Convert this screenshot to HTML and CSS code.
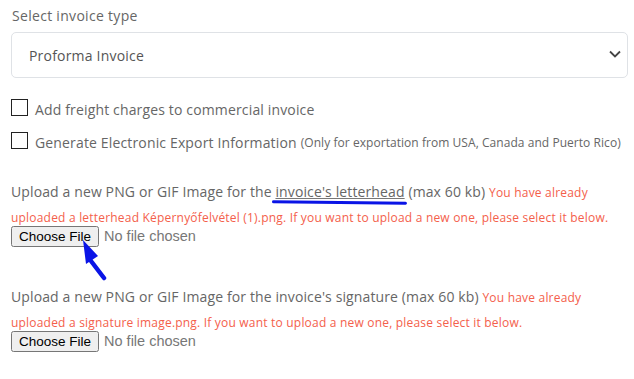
FILE: index.html
```html
<!DOCTYPE html>
<html lang="en">
<head>
    <meta charset="UTF-8">
    <title>Invoice settings</title>
    <link rel="stylesheet" href="styles.css">
</head>
<body>
    <div class="form">
        <label class="field-label" for="invoiceType">Select invoice type</label>
        <div class="select-wrap">
            <select id="invoiceType">
                <option>Proforma Invoice</option>
                <option>Commercial Invoice</option>
            </select>
            <svg class="chevron" width="12" height="8" viewBox="0 0 12 8"><path d="M1 1.5l5 5 5-5" fill="none" stroke="#444" stroke-width="1.8"/></svg>
        </div>

        <label class="check"><span class="box"></span>Add freight charges to commercial invoice</label>
        <label class="check"><span class="box"></span>Generate Electronic Export Information <small>(Only for exportation from USA, Canada and Puerto Rico)</small></label>

        <div class="upload">
            <p>Upload a new PNG or GIF Image for the <u class="marked">invoice's letterhead</u> (max 60 kb) <span class="warn">You have already uploaded a letterhead Képernyőfelvétel (1).png. If you want to upload a new one, please select it below.</span></p>
            <div class="file-row">
                <input type="file" id="letterhead">
                <svg class="arrow" width="30" height="42" viewBox="0 0 30 42"><path d="M24 39L11 22" stroke="#0a14e6" stroke-width="4.5" stroke-linecap="round"/><path d="M3 1L6 25L18 17Z" fill="#0a14e6"/></svg>
            </div>
        </div>

        <div class="upload second">
            <p>Upload a new PNG or GIF Image for the invoice's signature (max 60 kb) <span class="warn">You have already uploaded a signature image.png. If you want to upload a new one, please select it below.</span></p>
            <div class="file-row">
                <input type="file" id="signature">
            </div>
        </div>
    </div>
</body>
</html>
```

FILE: styles.css
```css
body {
    margin: 0;
    background: #fff;
    font-family: "Open Sans", Arial, sans-serif;
    color: #666;
}

.form {
    padding: 6px 6px 0 11px;
}

.field-label {
    display: block;
    font-size: 14px;
    letter-spacing: 0.3px;
    line-height: 20px;
    margin-bottom: 6px;
    padding-left: 1px;
}

.select-wrap {
    position: relative;
    margin-bottom: 22px;
}

.select-wrap select {
    display: block;
    width: 100%;
    height: 46px;
    padding: 0 17px;
    border: 1px solid #dfe2e6;
    border-radius: 5px;
    background: #fff;
    color: #555;
    font-family: inherit;
    font-size: 14px;
    letter-spacing: 0.2px;
    appearance: none;
}

.chevron {
    position: absolute;
    right: 7px;
    top: 18px;
}

.check {
    display: flex;
    align-items: center;
    font-size: 14px;
    letter-spacing: 0.15px;
    line-height: 20px;
    margin-bottom: 13px;
}

.check small {
    font-size: 12px;
    letter-spacing: 0.05px;
    margin-left: 4px;
}

.box {
    width: 15px;
    height: 15px;
    border: 1px solid #222;
    margin: -5px 7px 0 0;
    flex: none;
}

.upload {
    margin-top: 27px;
}

.upload.second {
    margin-top: 35px;
}

.upload p {
    margin: 0;
    font-size: 14px;
    letter-spacing: 0.12px;
    line-height: 24px;
}

.warn {
    color: #f4604b;
    font-size: 12px;
    letter-spacing: 0.2px;
}

.marked {
    position: relative;
    text-decoration-color: #777;
}

.marked::after {
    content: "";
    position: absolute;
    left: -3px;
    right: -3px;
    bottom: -3px;
    height: 3px;
    border-radius: 2px;
    background: #0a14e6;
    transform: rotate(0.6deg);
}

.file-row {
    position: relative;
    height: 26px;
    margin-top: -6px;
}

.file-row input {
    font-family: "Liberation Sans", Arial, sans-serif;
    font-size: 14.5px;
    color: #777;
}

.file-row input::file-selector-button {
    font-size: 13.5px;
    margin-right: 5px;
}

.arrow {
    position: absolute;
    left: 69px;
    top: 15px;
}
```
